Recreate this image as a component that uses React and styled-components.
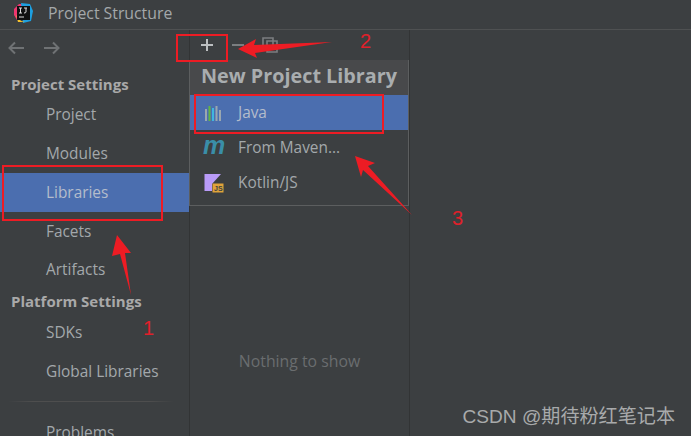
import React from 'react';
import styled, { createGlobalStyle } from 'styled-components';

const GlobalStyle = createGlobalStyle`
  html, body {
    margin: 0;
    padding: 0;
    background: #3c3f41;
  }
  * { box-sizing: border-box; }
`

const Janela = styled.div`
  position: relative;
  width: 691px;
  height: 436px;
  overflow: hidden;
  background: #3c3f41;
  color: #a9adb0;
  font-family: "Open Sans", "Noto Sans", sans-serif;
  font-size: 15.4px;
`

const BarraTitulo = styled.div`
  height: 30px;
  display: flex;
  align-items: center;
  gap: 15px;
  padding: 0 0 4px 13px;
  border-bottom: 1px solid #4f5152;
  font-size: 15.8px;
  color: #a4a8aa;
`

const Corpo = styled.div`
  display: flex;
  height: 406px;
`

const Lateral = styled.div`
  width: 190px;
  flex: none;
  border-right: 1px solid #323435;
`

const Navegacao = styled.div`
  height: 36px;
  display: flex;
  align-items: center;
  gap: 16px;
  padding-left: 8px;
`

const TituloSecao = styled.div`
  height: 24px;
  display: flex;
  align-items: center;
  padding-left: 11px;
  font-weight: 700;
  font-size: 15px;
  color: #a9a9a9;
`

const TituloProjeto = styled(TituloSecao)`
  margin-top: 6px;
  height: 23.6px;
`

const Item = styled.div`
  height: 38.7px;
  flex: none;
  display: flex;
  align-items: center;
  padding-left: 46px;
  background: ${(p) => (p.$ativo ? '#4b6eaf' : 'transparent')};
  color: ${(p) => (p.$ativo ? '#b4bccb' : '#a3a8ab')};
`

const Separador = styled.div`
  height: 1px;
  margin: 11px 15px 11px 8px;
  background: linear-gradient(to right, #3c3f41, #4e4e4e 15%, #4e4e4e 85%, #3c3f41);
`

const Meio = styled.div`
  width: 220px;
  flex: none;
  display: flex;
  flex-direction: column;
  border-right: 1px solid #323435;
`

const Ferramentas = styled.div`
  height: 30px;
  display: flex;
  align-items: center;
  gap: 17px;
  padding: 0 0 0 10px;
`

const Vazio = styled.div`
  flex: 1;
  display: flex;
  align-items: center;
  justify-content: center;
  padding-top: 226px;
  font-size: 15.8px;
  color: #6a6d6f;
`

const Popup = styled.div`
  position: absolute;
  left: 189px;
  top: 60px;
  width: 220px;
  height: 146px;
  background: #3c3f41;
  border-left: 1px solid #5c5e5f;
  border-right: 1px solid #5c5e5f;
  border-bottom: 1px solid #5c5e5f;
`

const PopupTitulo = styled.div`
  height: 35px;
  display: flex;
  align-items: center;
  padding: 0 0 4px 11px;
  background: #48494b;
  font-size: 19.8px;
  font-weight: 700;
  color: #a9adaf;
`

const PopupItem = styled.div`
  height: 35px;
  display: flex;
  align-items: center;
  gap: 14px;
  padding-left: 14px;
  background: ${(p) => (p.$ativo ? '#4b6eaf' : 'transparent')};
  color: ${(p) => (p.$ativo ? '#b4bccb' : '#a3a8ab')};
`

const CaixaIcone = styled.div`
  width: 20px;
  height: 20px;
  flex: none;
  display: flex;
  align-items: center;
  justify-content: center;
`

const Anotacoes = styled.svg`
  position: absolute;
  left: 0;
  top: 0;
  pointer-events: none;
`

const Numero = styled.div`
  position: absolute;
  left: ${(p) => p.$x}px;
  top: ${(p) => p.$y}px;
  color: #e0202a;
  font-family: "Liberation Sans", sans-serif;
  font-size: 20px;
  line-height: 24px;
`

const MarcaDagua = styled.div`
  position: absolute;
  right: 16px;
  top: 405px;
  color: #a8aaab;
  font-family: "Liberation Sans", "Noto Sans CJK SC", sans-serif;
  font-size: 19.1px;
  line-height: 24px;
  white-space: nowrap;
`

const LetraM = styled.span`
  font-family: "Liberation Sans", sans-serif;
  font-style: italic;
  font-weight: 700;
  font-size: 25px;
  line-height: 20px;
  position: relative;
  top: -3px;
  color: #3a8ea8;
`

const LogoIntellij = () => (
  <svg width="20" height="20" viewBox="0 0 20 20" style={{ flex: 'none' }}>
    <path d="M1 6 L6 1 L13 1 L13 10 L4 17 L1 12 Z" fill="#f0376f" />
    <path d="M8 0 L17 1 L20 8 L18 18 L10 20 Z" fill="#1d9fe0" />
    <path d="M3 12 L8 18 L12 19 L5 19 Z" fill="#f7c22d" />
    <rect x="4" y="3" width="13" height="14" fill="#111" />
    <rect x="6" y="13.5" width="5" height="1" fill="#ddd" />
    <path d="M6 5 H9 M7.5 5 V10 M6 10 H9 M11 5 H14 M13 5 V9 Q13 10 11 10" stroke="#ddd" strokeWidth="1" fill="none" />
  </svg>
)

const Seta = ({ invertida }) => (
  <svg width="18" height="14" viewBox="0 0 18 14" style={invertida ? { transform: 'scaleX(-1)' } : undefined}>
    <path d="M1 7 H16 M7 1.5 L1.5 7 L7 12.5" stroke="#6f7274" strokeWidth="2" fill="none" />
  </svg>
)

const IconeJava = () => (
  <svg width="18" height="16" viewBox="0 0 18 16">
    <rect x="0" y="4" width="2" height="12" fill="#9aa7b0" />
    <rect x="3.5" y="1" width="2" height="15" fill="#62b543" />
    <rect x="7" y="3" width="2" height="13" fill="#40b6e0" />
    <rect x="10.5" y="1" width="2" height="15" fill="#9aa7b0" />
    <rect x="14" y="5" width="2" height="11" fill="#9aa7b0" />
  </svg>
)

const IconeKotlin = () => (
  <svg width="20" height="20" viewBox="0 0 20 20">
    <path d="M0.5 1 H17 L8 11 V18 H0.5 Z" fill="#b99bf8" />
    <rect x="8.5" y="10.5" width="11" height="9" fill="#e0a33a" />
    <text x="10" y="17.8" fontSize="7" fontWeight="700" fontFamily="Liberation Sans" fill="#3c3f41">JS</text>
  </svg>
)

const App = () => {
  return (
    <Janela>
      <GlobalStyle />
      <BarraTitulo>
        <LogoIntellij />
        <span>Project Structure</span>
      </BarraTitulo>
      <Corpo>
        <Lateral>
          <Navegacao>
            <Seta />
            <Seta invertida />
          </Navegacao>
          <TituloProjeto>Project Settings</TituloProjeto>
          <Item>Project</Item>
          <Item>Modules</Item>
          <Item $ativo>Libraries</Item>
          <Item>Facets</Item>
          <Item>Artifacts</Item>
          <TituloSecao>Platform Settings</TituloSecao>
          <Item>SDKs</Item>
          <Item>Global Libraries</Item>
          <Separador />
          <Item>Problems</Item>
        </Lateral>
        <Meio>
          <Ferramentas>
            <svg width="14" height="14" viewBox="0 0 14 14">
              <path d="M7 1 V13 M1 7 H13" stroke="#bcbfc1" strokeWidth="2" />
            </svg>
            <svg width="14" height="14" viewBox="0 0 14 14">
              <path d="M1 7 H13" stroke="#7b7e80" strokeWidth="2" />
            </svg>
            <svg width="16" height="16" viewBox="0 0 16 16">
              <path d="M1 1 H11 V12 H1 Z M5 4 H15 V15 H5 Z" stroke="#7b7e80" strokeWidth="1.6" fill="#3c3f41" />
            </svg>
          </Ferramentas>
          <Vazio>Nothing to show</Vazio>
        </Meio>
      </Corpo>
      <Popup>
        <PopupTitulo>New Project Library</PopupTitulo>
        <PopupItem $ativo>
          <CaixaIcone><IconeJava /></CaixaIcone>
          Java
        </PopupItem>
        <PopupItem>
          <CaixaIcone><LetraM>m</LetraM></CaixaIcone>
          From Maven...
        </PopupItem>
        <PopupItem>
          <CaixaIcone><IconeKotlin /></CaixaIcone>
          Kotlin/JS
        </PopupItem>
      </Popup>

      <Anotacoes width="691" height="436" viewBox="0 0 691 436">
        <g fill="none" stroke="#ed1c24" strokeWidth="2">
          <rect x="177" y="35" width="50" height="26" />
          <rect x="3" y="166" width="159" height="54" />
          <rect x="195" y="95" width="188" height="38" />
        </g>
        <g fill="#ed1c24">
          <path d="M238 49 L256 39 L254 45 L332 42 L255 53 L257 58 Z" />
          <path d="M355 156 L375 163 L368 166 L412 215 L363 170 L361 177 Z" />
          <path d="M117 235 L131 253 L125 253 L131 295 L120 254 L112 256 Z" />
        </g>
      </Anotacoes>
      <Numero $x={143} $y={316}>1</Numero>
      <Numero $x={360} $y={29}>2</Numero>
      <Numero $x={452} $y={206}>3</Numero>
      <MarcaDagua>CSDN @期待粉红笔记本</MarcaDagua>
    </Janela>
  );
}

export default App;
